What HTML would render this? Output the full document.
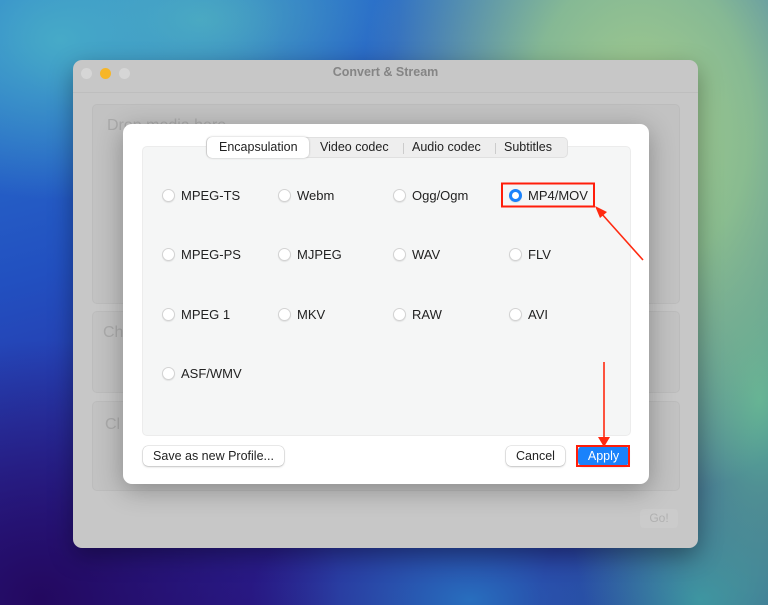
<!DOCTYPE html>
<html><head><meta charset="utf-8"><style>
*{margin:0;padding:0;box-sizing:border-box}
body{width:768px;height:605px;overflow:hidden;position:relative;font-family:"Liberation Sans",sans-serif;
background:
radial-gradient(280px 380px at 640px 120px, rgba(165,205,140,1) 0%, rgba(150,200,140,.85) 40%, rgba(120,190,150,0) 100%),
radial-gradient(200px 420px at 760px 400px, rgba(90,175,150,1) 0%, rgba(90,175,150,0) 100%),
radial-gradient(220px 160px at 60px 40px, rgba(70,170,200,1) 0%, rgba(70,170,200,0) 100%),
radial-gradient(200px 120px at 200px 20px, rgba(80,175,190,.9) 0%, rgba(80,175,190,0) 100%),
radial-gradient(300px 260px at 40px 600px, rgba(35,8,95,1) 0%, rgba(35,8,95,0) 100%),
radial-gradient(220px 120px at 470px 600px, rgba(40,110,190,1) 0%, rgba(40,110,190,0) 100%),
radial-gradient(160px 120px at 700px 600px, rgba(40,130,170,1) 0%, rgba(40,130,170,0) 100%),
linear-gradient(165deg,#2a78d0 0%,#2250c0 35%,#2a2aa0 65%,#2a1280 100%);}
.win{position:absolute;left:73px;top:60px;width:625px;height:488px;background:#c7c7c7;border-radius:9px;box-shadow:0 8px 24px rgba(0,0,0,.35)}
.title{position:absolute;top:5px;left:0;right:0;text-align:center;font-size:12.5px;font-weight:bold;color:#858585}
.tl{position:absolute;top:8px;width:11px;height:11px;border-radius:50%;background:#d6d6d6}
.tb{position:absolute;left:0;right:0;top:32px;border-top:1px solid #bebebe}
.box{position:absolute;left:92px;width:588px;background:#c2c2c2;border:1px solid #bcbcbc;border-radius:5px;color:#aaaaaa;font-size:16px}
.dlg{position:absolute;left:123px;top:124px;width:526px;height:360px;background:#fff;border-radius:9px;box-shadow:0 6px 26px rgba(0,0,0,.3)}
.panel{position:absolute;left:19px;top:22px;width:489px;height:290px;background:#f5f6f6;border-radius:5px;border:1px solid #ececec}
.tabs{position:absolute;left:83px;top:13px;width:362px;height:21px;background:#eeeeee;border-radius:5px;border:1px solid #e0e0e0;font-size:12.5px;color:#222}
.tab{position:absolute;top:2px}
.sel{position:absolute;left:0;top:-1px;width:102px;height:21px;background:#fff;border-radius:5px;box-shadow:0 0 2px rgba(0,0,0,.25)}
.sep{position:absolute;top:5px;height:11px;border-left:1px solid #ccc}
.r{position:absolute;font-size:13px;color:#222}
.r i{position:absolute;left:-19px;top:1px;width:13px;height:13px;border-radius:50%;background:#fff;border:1px solid #d3d3d3;box-shadow:0 1px 1px rgba(0,0,0,.08)}
.r i.on{background:#fff;border:3.5px solid #1a82fb}
.btn{position:absolute;top:322px;height:20px;background:#fff;border-radius:5px;box-shadow:0 0 0 .5px rgba(0,0,0,.15),0 1px 2px rgba(0,0,0,.18);font-size:12.5px;color:#222;text-align:center;line-height:20px}
</style></head><body>
<div class="win">
 <div class="tl" style="left:8px"></div><div class="tl" style="left:27px;background:#f6b629"></div><div class="tl" style="left:46px"></div>
 <div class="title">Convert &amp; Stream</div>
 <div class="tb"></div>
 <div style="position:absolute;left:567px;top:449px;width:38px;height:19px;background:#cbcbcb;border-radius:4px;color:#b0b0b0;font-size:12px;text-align:center;line-height:19px">Go!</div>
</div>
<div class="box" style="top:104px;height:200px;padding:12px 14px">Drop media here</div>
<div class="box" style="top:311px;height:82px;padding:12px 10px">Ch</div>
<div class="box" style="top:401px;height:90px;padding:14px 12px">Cl</div>
<div class="dlg">
 <div class="panel"></div>
 <div class="tabs">
  <div class="sel"></div>
  <span class="tab" style="left:12px">Encapsulation</span>
  <span class="tab" style="left:113px">Video codec</span>
  <div class="sep" style="left:196px"></div>
  <span class="tab" style="left:205px">Audio codec</span>
  <div class="sep" style="left:288px"></div>
  <span class="tab" style="left:297px">Subtitles</span>
 </div>
 <div class="r" style="left:58px;top:64px"><i></i>MPEG-TS</div>
 <div class="r" style="left:174px;top:64px"><i></i>Webm</div>
 <div class="r" style="left:289px;top:64px"><i></i>Ogg/Ogm</div>
 <div class="r" style="left:405px;top:64px"><i class="on"></i>MP4/MOV</div>
 <div class="r" style="left:58px;top:123px"><i></i>MPEG-PS</div>
 <div class="r" style="left:174px;top:123px"><i></i>MJPEG</div>
 <div class="r" style="left:289px;top:123px"><i></i>WAV</div>
 <div class="r" style="left:405px;top:123px"><i></i>FLV</div>
 <div class="r" style="left:58px;top:183px"><i></i>MPEG 1</div>
 <div class="r" style="left:174px;top:183px"><i></i>MKV</div>
 <div class="r" style="left:289px;top:183px"><i></i>RAW</div>
 <div class="r" style="left:405px;top:183px"><i></i>AVI</div>
 <div class="r" style="left:58px;top:242px"><i></i>ASF/WMV</div>
 <div class="btn" style="left:20px;width:141px">Save as new Profile...</div>
 <div class="btn" style="left:383px;width:59px">Cancel</div>
 <div class="btn" style="left:455px;width:51px;background:#1a82fb;color:#fff">Apply</div>
</div>
<svg width="768" height="605" style="position:absolute;left:0;top:0">
 <rect x="502" y="183.5" width="92" height="23" fill="none" stroke="#ff1d0a" stroke-width="2"/>
 <rect x="577" y="446" width="52" height="20" fill="none" stroke="#ff1d0a" stroke-width="2"/>
 <line x1="643" y1="260" x2="601" y2="213" stroke="#ff2a10" stroke-width="1.6"/>
 <polygon points="595,206 607,212 600,218" fill="#ff2a10"/>
 <line x1="604" y1="362" x2="604" y2="438" stroke="#ff2a10" stroke-width="1.6"/>
 <polygon points="598,437 610,437 604,447" fill="#ff2a10"/>
</svg>
</body></html>
